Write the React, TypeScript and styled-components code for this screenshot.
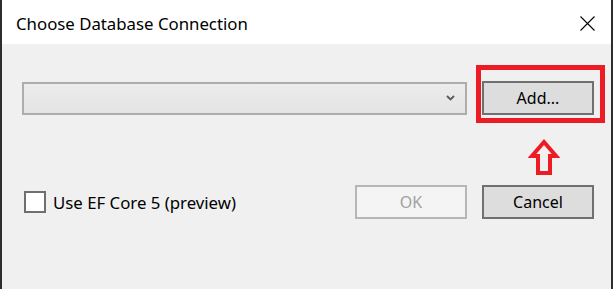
import React from 'react';
import styled, {createGlobalStyle} from 'styled-components';

const GlobalStyle = createGlobalStyle`
  html, body {
    margin: 0;
    padding: 0;
    background: #f0f0f0;
  }

  body {
    font-family: "Noto Sans", "Open Sans", sans-serif;
    color: #000;
  }
`;

const StyledWindow = styled.div`
  width: 613px;
  height: 289px;
  box-sizing: border-box;
  border-left: 2px solid #2b2d31;
  border-right: 2px solid #2b2d31;
  background: #f0f0f0;
  display: flex;
  flex-direction: column;
  overflow: hidden;
`;

const TitleBar = styled.div`
  height: 44px;
  flex: none;
  background: #fff;
  display: flex;
  align-items: center;
  justify-content: space-between;
  padding: 2px 16px 0 14px;
  box-sizing: border-box;

  .title {
    font-size: 16.8px;
  }

  svg {
    display: block;
    margin-top: 1px;
  }
`;

const Body = styled.div`
  padding: 37px 17px 0 20px;
  display: flex;
  flex-direction: column;
`;

const Row = styled.div<{$gap?: number}>`
  display: flex;
  align-items: center;
  gap: 15px;
  margin-top: ${({$gap}) => $gap || 0}px;
`;

const Combo = styled.div`
  flex: 1;
  height: 33px;
  box-sizing: border-box;
  border: 2px solid #adadad;
  background: linear-gradient(#ececec, #e4e4e4);
  display: flex;
  align-items: center;
  justify-content: flex-end;
  padding-right: 10px;

  svg {
    display: block;
  }
`;

const Button = styled.button<{$disabled?: boolean}>`
  width: 112px;
  height: 34px;
  box-sizing: border-box;
  margin: 0;
  padding: 0;
  font-family: inherit;
  font-size: 16px;
  border: 2px solid ${({$disabled}) => ($disabled ? '#b4b7b9' : '#707070')};
  background: ${({$disabled}) => ($disabled ? '#f4f4f4' : '#dddddd')};
  color: ${({$disabled}) => ($disabled ? '#a0a0a0' : '#000')};
`;

const Highlighted = styled.div`
  position: relative;
  flex: none;

  .frame {
    position: absolute;
    left: -6px;
    top: -16px;
    width: 129px;
    height: 58px;
    box-sizing: border-box;
    border: 5px solid #ed1c24;
    pointer-events: none;
  }

  .arrow {
    position: absolute;
    left: 46px;
    top: 56px;
  }
`;

const CheckLabel = styled.label`
  display: flex;
  align-items: center;
  gap: 7px;
  margin-left: 2px;
  font-size: 16.8px;
  flex: 1;

  .box {
    width: 22px;
    height: 22px;
    box-sizing: border-box;
    border: 2px solid #6f6f6f;
    background: #fff;
  }
`;

const App: React.FC = () => (
  <StyledWindow>
    <GlobalStyle />
    <TitleBar>
      <span className="title">Choose Database Connection</span>
      <svg width="15" height="15" viewBox="0 0 15 15">
        <path d="M0.5 0.5 L14.5 14.5 M14.5 0.5 L0.5 14.5" stroke="#000" strokeWidth="1.1" fill="none" />
      </svg>
    </TitleBar>
    <Body>
      <Row>
        <Combo>
          <svg width="9" height="6" viewBox="0 0 9 6">
            <path d="M1 1 L4.5 4.5 L8 1" stroke="#5a5a5a" strokeWidth="1.8" fill="none" />
          </svg>
        </Combo>
        <Highlighted>
          <Button>Add...</Button>
          <div className="frame" />
          <svg className="arrow" width="32" height="40" viewBox="0 0 32 40">
            <polygon
              points="16,5 28,19 22,19 22,36 10,36 10,19 4,19"
              fill="none"
              stroke="#ed1c24"
              strokeWidth="4"
              strokeLinejoin="miter"
            />
          </svg>
        </Highlighted>
      </Row>
      <Row $gap={70}>
        <CheckLabel>
          <span className="box" />
          <span>Use EF Core 5 (preview)</span>
        </CheckLabel>
        <Button $disabled>OK</Button>
        <Button>Cancel</Button>
      </Row>
    </Body>
  </StyledWindow>
);

export default App;
